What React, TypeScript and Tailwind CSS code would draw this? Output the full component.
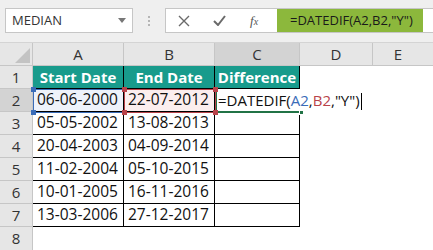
import React from "react";

const font = { fontFamily: '"Open Sans", "Liberation Sans", sans-serif' };

const rows = [
  ["06-06-2000", "22-07-2012"],
  ["05-05-2002", "13-08-2013"],
  ["20-04-2003", "04-09-2014"],
  ["11-02-2004", "05-10-2015"],
  ["10-01-2005", "16-11-2016"],
  ["13-03-2006", "27-12-2017"],
];

function Corner({ cls }: { cls: string }) {
  return <div className={`absolute w-[5px] h-[5px] ${cls}`} />;
}

export default function App() {
  return (
    <div className="w-[433px] h-[250px] overflow-hidden bg-white relative" style={font}>
      {/* toolbar */}
      <div className="h-[43px] bg-[#efefef] flex items-start pt-[8px] pl-[5px] border-b border-[#d4d4d4]">
        <div className="w-[128px] h-[25px] bg-white border border-[#c6c6c6] flex items-center justify-between pl-[6px] pr-[6px]">
          <span className="text-[13px] text-[#333]">MEDIAN</span>
          <svg width="8" height="5" viewBox="0 0 8 5"><path d="M0 0h8L4 5z" fill="#777" /></svg>
        </div>
        <div className="w-[32px] h-[25px] flex flex-col items-center justify-center gap-[2px]">
          <div className="w-[2px] h-[2px] bg-[#b5b5b5]" />
          <div className="w-[2px] h-[2px] bg-[#b5b5b5]" />
          <div className="w-[2px] h-[2px] bg-[#b5b5b5]" />
        </div>
        <div className="h-[25px] flex-1 bg-white border border-[#c6c6c6] border-r-0 flex items-center">
          <div className="w-[111px] flex items-center h-full">
            <svg className="ml-[12px]" width="12" height="12" viewBox="0 0 12 12"><path d="M1 1l10 10M11 1L1 11" stroke="#6a6a6a" strokeWidth="1.4" /></svg>
            <svg className="ml-[23px]" width="13" height="11" viewBox="0 0 13 11"><path d="M1 6l4 4L12 1" stroke="#6a6a6a" strokeWidth="2" fill="none" /></svg>
            <span className="ml-[24px] text-[13px] italic text-[#555]" style={{ fontFamily: '"Liberation Serif", serif' }}>f<span className="text-[10px]">x</span></span>
          </div>
          <div className="h-full w-[146px] bg-[#8cb83c] flex items-center pl-[13px] text-[13px] text-[#1a1a1a]">=DATEDIF(A2,B2,"Y")</div>
        </div>
      </div>

      {/* column header */}
      <div className="flex h-[23px] bg-[#e6e6e6] border-b border-[#c6c6c6] text-[15px] text-[#333]">
        <div className="w-[33px] border-r border-[#c6c6c6] relative">
          <svg className="absolute left-[15px] top-[5px]" width="15" height="15" viewBox="0 0 15 15"><path d="M15 0V15H0z" fill="#c3c3c3" /></svg>
        </div>
        <div className="w-[91px] border-r border-[#c6c6c6] flex items-center justify-center">A</div>
        <div className="w-[91px] border-r border-[#c6c6c6] flex items-center justify-center">B</div>
        <div className="w-[85px] border-r border-[#c6c6c6] bg-[#d3d3d3] flex items-center justify-center">C</div>
        <div className="w-[73px] border-r border-[#c6c6c6] flex items-center justify-center">D</div>
        <div className="flex-1 flex items-center justify-center pr-[10px]">E</div>
      </div>

      {/* row 1 */}
      <div className="flex h-[23px]">
        <div className="w-[33px] bg-[#e6e6e6] border-r border-b border-[#c6c6c6] flex items-center justify-center text-[15px] text-[#333]">1</div>
        <div className="w-[91px] bg-[#189b8c] border-r border-b border-black flex items-center justify-center text-[15px] font-bold text-white">Start Date</div>
        <div className="w-[91px] bg-[#189b8c] border-r border-b border-black flex items-center justify-center text-[15px] font-bold text-white">End Date</div>
        <div className="w-[85px] bg-[#189b8c] border-r border-b border-black flex items-center justify-center text-[15px] font-bold text-white">Difference</div>
      </div>

      {rows.map((r, i) => (
        <div key={i} className="flex h-[23px]">
          <div className={`w-[33px] border-r border-b border-[#c6c6c6] flex items-center justify-center text-[15px] text-[#333] ${i === 0 ? "bg-[#d3d3d3]" : "bg-[#e6e6e6]"}`}>{i + 2}</div>
          <div className={`w-[91px] border-r border-b border-black flex items-center pl-[4px] text-[15.5px] text-[#111] ${i === 0 ? "bg-[#eef2fa]" : ""}`}>{r[0]}</div>
          <div className={`w-[91px] border-r border-b border-black flex items-center pl-[4px] text-[15.5px] text-[#111] ${i === 0 ? "bg-[#fbeeee]" : ""}`}>{r[1]}</div>
          <div className={`w-[85px] border-b border-black flex items-center pl-[3px] text-[15px] text-[#111] whitespace-nowrap ${i === 0 ? "border-r-0 pr-[1px]" : "border-r"}`}>
            {i === 0 ? (
              <span className="relative z-10 bg-white pr-[2px]">
                =DATEDIF(<span className="text-[#3a6cb8]">A2</span>,<span className="text-[#b8434a]">B2</span>,"Y")
                <span className="inline-block w-[1px] h-[17px] bg-black align-middle ml-[1px]" />
              </span>
            ) : null}
          </div>
        </div>
      ))}

      <div className="flex h-[23px]">
        <div className="w-[33px] bg-[#e6e6e6] border-r border-[#c6c6c6] flex items-center justify-center text-[15px] text-[#333]">8</div>
      </div>

      {/* selection overlays */}
      <div className="absolute left-[215px] top-[111px] w-[86px] h-[2px] bg-[#217346]">
        <div className="absolute -right-[3px] -bottom-[2px] w-[5px] h-[5px] bg-[#217346] border border-white" />
      </div>
      <div className="absolute left-[215px] top-[89px] w-[2px] h-[24px] bg-[#217346]" />
      <div className="absolute left-[33px] top-[89px] w-[92px] h-[24px] border border-[#3a6cb8]">
        <Corner cls="-left-[3px] -top-[3px] bg-[#3a6cb8]" />
        <Corner cls="-left-[3px] -bottom-[3px] bg-[#3a6cb8]" />
      </div>
      <div className="absolute left-[124px] top-[89px] w-[92px] h-[24px] border border-[#b8434a]">
        <Corner cls="-left-[3px] -top-[3px] bg-[#b8434a]" />
        <Corner cls="-left-[3px] -bottom-[3px] bg-[#b8434a]" />
        <Corner cls="-right-[3px] -top-[3px] bg-[#b8434a]" />
        <Corner cls="-right-[3px] -bottom-[3px] bg-[#b8434a]" />
      </div>
    </div>
  );
}
